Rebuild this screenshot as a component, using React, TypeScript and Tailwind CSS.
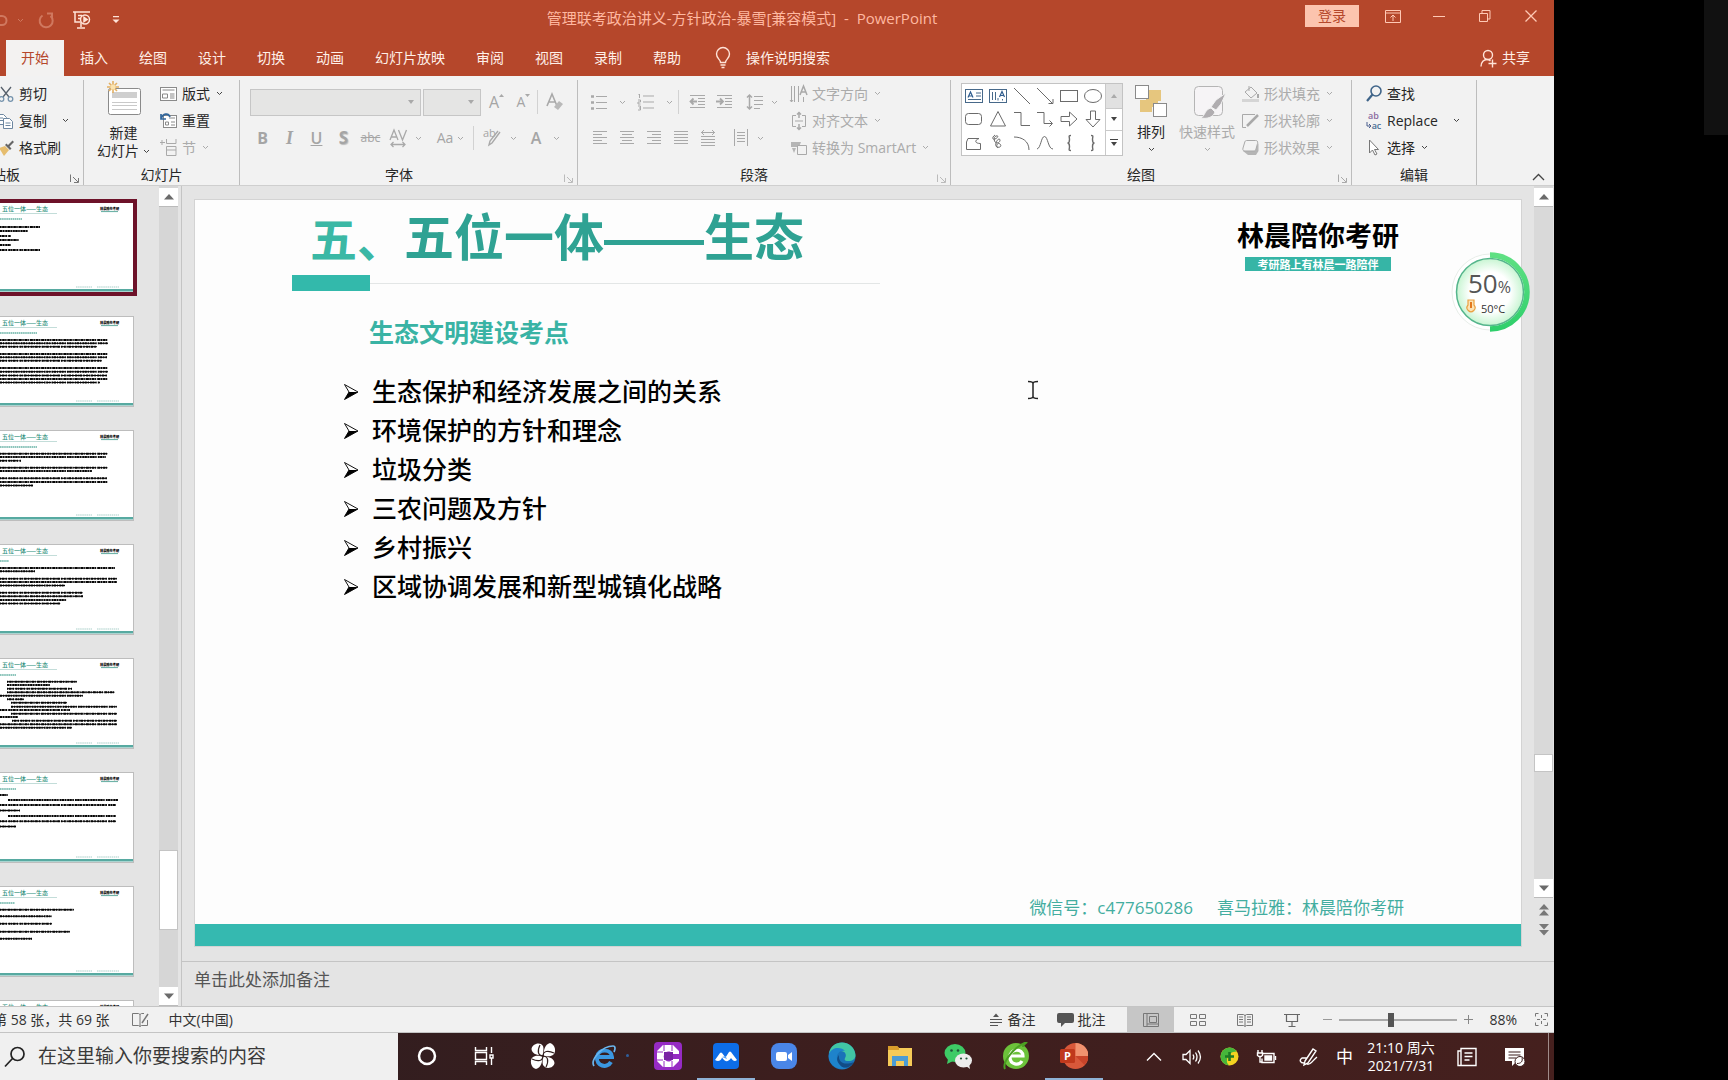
import React from "react";

type Kids = { children?: React.ReactNode };

function Ico({ w = 16, h = 16, s = "#555", sw = 1, f = "none", children }: Kids & { w?: number; h?: number; s?: string; sw?: number; f?: string }) {
  return (
    <svg width={w} height={h} viewBox={`0 0 ${w} ${h}`} fill={f} stroke={s} strokeWidth={sw} className="shrink-0 overflow-visible" aria-hidden="true">
      {children}
    </svg>
  );
}

const Chev = ({ c = "#444" }: { c?: string }) => (
  <Ico w={7} h={5} s={c}><path d="M1 1l2.5 2.5L6 1" /></Ico>
);
const Tri = ({ up = false, c = "#6b6b6b" }: { up?: boolean; c?: string }) => (
  <Ico w={10} h={6} s="none" f={c}><path d={up ? "M0 5.5L5 0l5 5.5z" : "M0 .5L5 6l5-5.5z"} /></Ico>
);
const Launcher = ({ c = "#777" }: { c?: string }) => (
  <Ico w={9} h={9} s={c}><path d="M.5 8V.5M3 3l5 5M8.5 4v4.500H4" /></Ico>
);
const VSep = () => <span className="h-6 w-px shrink-0 bg-[#d2d2d2]" />;

const GRAY = "#a9a9a9";

function Group({ label, launch, className, labelClass = "justify-center", children }: Kids & { label: string; launch?: string; className: string; labelClass?: string }) {
  return (
    <section aria-label={label} className={`flex shrink-0 flex-col border-r border-[#bdbdbd] ${className}`}>
      <div className="flex h-[85px]">{children}</div>
      <div className={`relative flex h-5 items-center text-sm ${labelClass}`}>
        <span className="leading-5">{label}</span>
        {launch && (
          <button aria-label={`${label}设置`} className="absolute right-1 bottom-[2px]"><Launcher c={launch} /></button>
        )}
      </div>
    </section>
  );
}

function RowBtn({ icon, text, chev, dim, wide }: { icon: React.ReactNode; text: string; chev?: boolean; dim?: boolean; wide?: boolean }) {
  return (
    <button className={`flex h-[27px] items-center gap-[5px] whitespace-nowrap text-sm ${dim ? "text-[#ababab]" : "text-[#262626]"}`}>
      <span className="flex w-[17px] shrink-0 justify-center">{icon}</span>
      <span>{text}</span>
      {chev && <span className={wide ? "ml-[10px]" : "ml-px"}><Chev c={dim ? "#ababab" : "#444"} /></span>}
    </button>
  );
}

const tabs = ["插入", "绘图", "设计", "切换", "动画", "幻灯片放映", "审阅", "视图", "录制", "帮助"];

function TitleBar() {
  return (
    <header className="bg-[#b5472b] text-[#ffc9b5]">
      <div className="relative flex h-10 items-start justify-center">
        <div className="absolute top-2 left-0 flex h-6 items-center">
          <button aria-label="撤消"><Ico w={8} h={18} s="#d0785f" sw={2}><path d="M-4 5h6a4.500 4.500 0 010 9H-1" /></Ico></button>
          <span className="ml-[9px]"><Chev c="#d0785f" /></span>
          <button aria-label="恢复" className="ml-[14px]"><Ico w={18} h={18} s="#d0785f" sw={2}><path d="M4.500 4.500a6.500 6.500 0 108 .5M9 2.500h5v5" /></Ico></button>
          <button aria-label="从头开始" className="ml-4">
            <Ico w={20} h={20} s="#ffe3d8" sw={1.500}>
              <path d="M1 2h17M3 2v10h5M6 5.500h4M6 8.500h2M9 12v5M5 18h8" /><circle cx="13" cy="9.500" r="4.500" /><path d="M12 7.500v4l3-2z" fill="#ffe3d8" />
            </Ico>
          </button>
          <button aria-label="自定义快速访问工具栏" className="ml-5"><Ico w={8} h={8} s="none" f="#ffe3d8"><path d="M1 0h6v1.300H1zM.5 3.500h7L4 7z" /></Ico></button>
        </div>
        <h1 className="mt-2 ml-[-70px] text-[15px] leading-5 whitespace-pre text-[#ffb8a0]">管理联考政治讲义-方针政治-暴雪[兼容模式]  -  PowerPoint</h1>
        <div className="absolute top-[5px] right-[16px] flex h-[22px] items-center">
          <button className="mr-[26px] h-[22px] w-[54px] bg-[#fcc4ae] text-sm text-[#b5472b]">登录</button>
          <button aria-label="功能区显示选项" className="mr-8"><Ico s="#ffc9b5"><path d="M.5 2.500h15v12H.5zM.5 5h15M8 13V7M5.500 9.500L8 7l2.500 2.500" /></Ico></button>
          <button aria-label="最小化" className="mr-[33px]"><Ico w={12} s="#ffc9b5"><path d="M0 8.500h12" /></Ico></button>
          <button aria-label="还原" className="mr-8"><Ico w={14} s="#ffc9b5"><path d="M1.500 5.500h8v8h-8zM4 5V2.500h8v8.500H9.500" /></Ico></button>
          <button aria-label="关闭"><Ico w={14} s="#ffc9b5" sw={1.300}><path d="M1.500 2.500l11 11M12.500 2.500l-11 11" /></Ico></button>
        </div>
      </div>
      <nav className="flex h-9 items-stretch gap-px pl-[6px] text-sm text-[#fff0e8]">
        <button className="bg-[#f3f2f1] px-[15px] text-[#b5472b]">开始</button>
        {tabs.map((t) => <button key={t} className="px-[15px] whitespace-nowrap">{t}</button>)}
        <button className="ml-[18px] flex items-center gap-[15px]">
          <Ico w={16} h={22} s="#ffe3d8" sw={1.400}><path d="M5.500 15.500c0-3-4-4-4-8.500a6.500 6.500 0 0113 0c0 4.500-4 5.500-4 8.500zM5.500 18h5M6.500 20.500h3" /></Ico>
          操作说明搜索
        </button>
        <button className="mr-6 ml-auto flex items-center gap-1">
          <Ico w={18} h={19} s="#ffe3d8" sw={1.400}><circle cx="8" cy="6" r="4.500" /><path d="M1 17.500c0-4.500 3-7 6-7 1.500 0 2.500.5 3.500 1.500M8.500 14.500h8M12.500 10.500v8" /></Ico>
          共享
        </button>
      </nav>
    </header>
  );
}

const BtnI = ({ label, className = "w-[27px]", children }: Kids & { label: string; className?: string }) => (
  <button aria-label={label} className={`flex shrink-0 items-center justify-center ${className}`}>{children}</button>
);

function Lines({ kind }: { kind: "l" | "c" | "r" | "j" | "d" }) {
  const rows = kind === "d" ? [6.500, 9.500, 12.500, 15.500] : [1.500, 4.500, 7.500, 10.500, 13.500];
  return (
    <Ico s={GRAY}>
      {rows.map((y, i) => {
        const short = i % 2 === 1 && kind !== "j" && kind !== "d";
        const a = short ? (kind === "c" ? 3 : kind === "r" ? 6 : 1) : 1;
        const b = short ? (kind === "c" ? 13 : kind === "l" ? 10 : 15) : 15;
        return <path key={y} d={`M${a} ${y}H${b}`} />;
      })}
      {kind === "d" && <path d="M1 2.500h14M4 0L1.500 2.500 4 5M12 0l2.500 2.500L12 5" />}
    </Ico>
  );
}

const shapes: React.ReactNode[] = [
  <g key="a"><rect x=".5" y="2.500" width="17" height="13" stroke="#47698a" /><path d="M11 6h5M11 9h5M3 12.500h13" stroke="#47698a" /><path d="M3 10.500L5.500 5 8 10.500M4 9h3" stroke="#2f5d8f" strokeWidth="1.200" /></g>,
  <g key="b"><rect x=".5" y="2.500" width="17" height="13" stroke="#47698a" /><path d="M3.500 5v8M6.500 5v8M9 11v2.500M13.500 12v1.500" stroke="#47698a" /><path d="M10.500 10L13 4.500 15.500 10M11.500 8.500h3" stroke="#2f5d8f" strokeWidth="1.200" /></g>,
  <path key="c" d="M1 1l16 16" />,
  <path key="d" d="M1 1l16 16M12.500 16.500H17V12" />,
  <rect key="e" x=".5" y="3.500" width="17" height="11" />,
  <ellipse key="f" cx="9" cy="9" rx="8.500" ry="6.500" />,
  <rect key="g" x=".5" y="3.500" width="16" height="11" rx="3" />,
  <path key="h" d="M9 1.500L16.500 16h-15z" />,
  <path key="i" d="M1 2.500h7v13h9" />,
  <path key="j" d="M1 2.500h7v11h8M13.500 10.500l3 3-3 3" />,
  <path key="k" d="M1 6.500h8.500V2L17 9l-7.500 7v-4.500H1z" />,
  <path key="l" d="M6.500 1v8.500H2L9 17l7-7.500h-4.500V1z" />,
  <path key="m" d="M3 4.500h11c-5 2-4 5 1.500 5v6H1.500V8z" />,
  <path key="n" d="M6 1C3 3 3 6 6 5s4-4 1-3-2 7 1 7 4-4 2-4-5 7-2 8 5-1 3-3-5 2-2 4" />,
  <path key="o" d="M1 3c8 0 15 4 15 13" />,
  <path key="p" d="M1 15C5 14 5 2.500 8.500 2.500S12 15 17 15" />,
  <path key="q" d="M11 1.500c-3 0-1.500 1-1.500 4 0 2-.5 3.500-2 3.500 1.500 0 2 1.500 2 3.500 0 3-1.500 4 1.500 4" strokeWidth="1.400" />,
  <path key="r" d="M7 1.500c3 0 1.500 1 1.500 4 0 2 .5 3.500 2 3.500-1.500 0-2 1.500-2 3.500 0 3 1.500 4-1.500 4" strokeWidth="1.400" />,
];

function Ribbon() {
  return (
    <div className="flex h-[110px] shrink-0 overflow-hidden border-b border-[#cfcfcf] bg-[#f2f2f2] pt-1 text-[#262626]">
      <Group label="剪贴板" launch="#777" className="w-[84px]" labelClass="-ml-[22px] justify-start">
        <div className="-ml-[3px] flex flex-col">
          <RowBtn text="剪切" icon={<Ico s="#56606b" sw={1.300}><path d="M3 1l8 10M13 1L5 11" /><circle cx="3.500" cy="13" r="2.300" stroke="#7593ad" /><circle cx="12.500" cy="13" r="2.300" stroke="#7593ad" /></Ico>} />
          <RowBtn text="复制" chev wide icon={<Ico w={17} s="#6d87a0"><path d="M.5 1.500h6l3 3v7h-9z" fill="#fff" /><path d="M6.500 5.500h6l3 3v7h-9z" fill="#fff" /><path d="M2 5h4M2 7.500h4M8.500 10h5M8.500 12.500h5" /></Ico>} />
          <RowBtn text="格式刷" icon={<Ico s="none"><path d="M1 8l6-2 4 4-5 6z" fill="#e6bd6e" /><path d="M7 5l5 5 1.500-1.500-2-2L16 2l-1.500-1.500L10 5 8.500 3.500z" fill="#666" /></Ico>} />
        </div>
      </Group>

      <Group label="幻灯片" className="w-[156px]">
        <div className="flex gap-[9px] pl-3">
          <button className="flex w-[55px] flex-col items-center text-sm leading-[18px] whitespace-nowrap">
            <Ico w={36} h={38} s="#8a8a8a">
              <rect x="2.500" y="8.500" width="32" height="26" rx="2" fill="#fff" />
              <rect x="6" y="12" width="25" height="6" fill="#cfcfcf" stroke="none" />
              <path d="M6 22.500h25M6 25.500h25M6 29.500h25" stroke="#c9c9c9" />
              <path d="M7 1v12M1 7h12M3 3l8 8M11 3l-8 8" stroke="#e3b062" strokeWidth="1.600" /><circle cx="7" cy="7" r="2.500" fill="#fbe3ae" stroke="none" />
            </Ico>
            <span className="mt-[6px]">新建</span>
            <span className="flex items-center gap-1">幻灯片<Chev /></span>
          </button>
          <div className="flex flex-col">
            <RowBtn text="版式" chev icon={<Ico w={17} s="#8a8a8a"><rect x=".5" y="1.500" width="16" height="13" fill="#fff" /><path d="M2.500 4h12M2.500 8h5v4h-5zM10 8h4.500M10 10h4.500M10 12h4.500" stroke="#888" /></Ico>} />
            <RowBtn text="重置" icon={<Ico w={17} h={17} s="#8a8a8a"><rect x="3.500" y="3.500" width="13" height="12" fill="#fff" /><path d="M9 6h6M5.500 10h3v3h-3zM11 10h4M11 13h4" /><path d="M1 2v5h5M1 6.500C3 2 8 0 10 5" stroke="#33679c" strokeWidth="1.700" /></Ico>} />
            <RowBtn text="节" chev dim icon={<Ico w={17} h={18} s={GRAY}><path d="M2 1v5M0 3.500h5M6.500 0v4.500H16V0M6.500 7.500H16v9H6.500zM6.500 11H16" /></Ico>} />
          </div>
        </div>
      </Group>

      <Group label="字体" launch="#bbb" className="w-[338px]" labelClass="justify-center pr-[19px]">
        <div className="flex w-full flex-col pt-[8px] pl-2 text-[#a5a5a5]">
          <div className="flex h-7 items-center">
            <select aria-label="字体名称" disabled className="ml-[2px] h-[27px] w-[171px] appearance-none border border-[#c6c6c6] bg-[#e5e5e4]" />
            <span className="pointer-events-none -ml-[13px] w-[13px]"><Ico w={6} h={4} s="none" f={GRAY}><path d="M0 0h6L3 4z" /></Ico></span>
            <select aria-label="字号" disabled className="ml-[2px] h-[27px] w-[58px] appearance-none border border-[#c6c6c6] bg-[#e5e5e4]" />
            <span className="pointer-events-none -ml-[13px] w-[13px]"><Ico w={6} h={4} s="none" f={GRAY}><path d="M0 0h6L3 4z" /></Ico></span>
            <BtnI label="增大字号" className="ml-[2px] w-[27px]"><span className="text-base">A</span><span className="-mt-3"><Ico w={5} h={4} s="none" f={GRAY}><path d="M0 3L2.500 0 5 3z" /></Ico></span></BtnI>
            <BtnI label="减小字号"><span className="text-sm">A</span><span className="-mt-3"><Ico w={5} h={4} s="none" f={GRAY}><path d="M0 0h5L2.500 3z" /></Ico></span></BtnI>
            <VSep />
            <BtnI label="清除格式" className="w-[34px]"><Ico w={18} h={18} s={GRAY} sw={1.600}><path d="M1 13L6 1l5 12M3 9h6" /><path d="M8 14l5-6 4 3-5 6z" fill="#b9b9b9" stroke="none" /></Ico></BtnI>
          </div>
          <div className="mt-2 flex h-7 items-center pl-px text-base">
            <BtnI label="加粗"><b>B</b></BtnI>
            <BtnI label="倾斜"><span className="font-['Liberation_Serif'] text-lg font-bold italic">I</span></BtnI>
            <BtnI label="下划线"><span className="font-semibold underline">U</span></BtnI>
            <BtnI label="阴影"><b className="text-[17px] text-shadow-[1px_1px_1px_#bbb]">S</b></BtnI>
            <BtnI label="删除线"><span className="text-xs line-through">abc</span></BtnI>
            <BtnI label="字符间距" className="w-11 gap-2 pr-px">
              <Ico w={18} h={18} s={GRAY} sw={1.300}><path d="M1 11L5 1l4 10M2.500 8h5M9.500 1l4 10 4-10M2 15.500h14M4.500 13L2 15.500 4.500 18M13.500 13l2.500 2.500-2.500 2.500" /></Ico><Chev c={GRAY} />
            </BtnI>
            <BtnI label="更改大小写" className="w-[45px] gap-1 text-sm">Aa<Chev c={GRAY} /></BtnI>
            <VSep />
            <BtnI label="突出显示" className="ml-1 w-11 gap-[9px]">
              <span className="relative flex h-[18px] w-[18px]"><span className="-mt-1 text-[11px] leading-4">ab</span><svg width="18" height="18" viewBox="0 0 18 18" fill="none" stroke={GRAY} strokeWidth="1.400" className="absolute inset-0" aria-hidden="true"><path d="M17 3L9 14l-3 2 1-4 8-10" /></svg></span><Chev c={GRAY} />
            </BtnI>
            <BtnI label="字体颜色" className="w-[47px] gap-3"><span className="font-semibold">A</span><Chev c={GRAY} /></BtnI>
          </div>
        </div>
      </Group>

      <Group label="段落" launch="#bbb" className="w-[373px]" labelClass="justify-center pr-[20px]">
        <div className="flex w-[210px] flex-col pt-[8px] pl-2">
          <div className="flex h-7 items-center">
            <BtnI label="项目符号" className="w-[45px] gap-3"><Ico s={GRAY}><path d="M5 2.500h11M5 8.500h11M5 14.500h11" /><path d="M0 2.500h3M0 8.500h3M0 14.500h3" strokeWidth="2.500" /></Ico><Chev c={GRAY} /></BtnI>
            <BtnI label="编号" className="ml-px w-[46px] gap-3"><Ico w={17} h={18} s={GRAY}><path d="M6 3h11M6 9h11M6 15h11M2.500 1v4M1.500 2l1-1M1 7h2.500v2H1v2h2.500M1 13h2.500v2H2M3.500 15v2H1" /></Ico><Chev c={GRAY} /></BtnI>
            <VSep />
            <BtnI label="减少缩进" className="ml-1 w-[27px]"><Ico s={GRAY}><path d="M1 1.500h15M9 4.500h7M9 7.500h7M9 10.500h7M1 13.500h15" /><path d="M8 7.500H1.500M4.500 4.500l-3 3 3 3" strokeWidth="1.800" /></Ico></BtnI>
            <BtnI label="增加缩进"><Ico s={GRAY}><path d="M1 1.500h15M9 4.500h7M9 7.500h7M9 10.500h7M1 13.500h15" /><path d="M0 7.500h6.500M4 4.500l3 3-3 3" strokeWidth="1.800" /></Ico></BtnI>
            <span className="ml-[2px]"><VSep /></span>
            <BtnI label="行距" className="w-[46px] gap-2"><Ico w={17} h={18} s={GRAY}><path d="M8 3.500h9M8 7.500h9M8 11.500h9M8 15.500h6" /><path d="M3.500 2v14M1 4.500L3.500 2 6 4.500M1 13.500L3.500 16 6 13.500" strokeWidth="1.500" /></Ico><Chev c={GRAY} /></BtnI>
          </div>
          <div className="mt-2 flex h-7 items-center">
            <BtnI label="左对齐"><Lines kind="l" /></BtnI>
            <BtnI label="居中"><Lines kind="c" /></BtnI>
            <BtnI label="右对齐"><Lines kind="r" /></BtnI>
            <BtnI label="两端对齐"><Lines kind="j" /></BtnI>
            <BtnI label="分散对齐"><Lines kind="d" /></BtnI>
            <span className="ml-[3px]"><VSep /></span>
            <BtnI label="分栏" className="ml-[2px] w-[44px] gap-2"><Ico h={18} s={GRAY}><path d="M1.500 0v17M14.500 0v17M4 3.500h8M4 6.500h8M4 9.500h8M4 12.500h8" /></Ico><Chev c={GRAY} /></BtnI>
          </div>
        </div>
        <div className="flex flex-col pl-[2px]">
          <RowBtn dim chev text="文字方向" icon={<Ico w={18} h={18} s={GRAY}><path d="M1.500 1v16M4.500 1v16M8.500 1v16M0 15l1.500 2L3 15M13.500 12v5" /><path d="M10 10l3.500-9L17 10M11.500 7h4" strokeWidth="1.500" /></Ico>} />
          <RowBtn dim chev text="对齐文本" icon={<Ico h={18} s={GRAY}><path d="M5 3.500H1.500v11H5M11 3.500h3.500v11H11M4 9h8" /><path d="M8 0v6M6 2.500L8 .5l2 2M8 12v6M6 15.500l2 2 2-2" strokeWidth="1.500" /></Ico>} />
          <RowBtn dim chev text="转换为 SmartArt" icon={<Ico s={GRAY}><path d="M0 2h10l-2 5H0zM1 8h4l-2 5z" fill="#b5b5b5" stroke="none" /><path d="M6.500 5.500h9v9h-9z" fill="#f2f2f2" /></Ico>} />
        </div>
      </Group>

      <Group label="绘图" launch="#aaa" className="w-[401px]" labelClass="justify-center pr-[20px]">
        <div className="mt-[3px] ml-[10px] flex h-[73px] shrink-0 border border-[#c3c3c3] bg-white">
          <div className="grid w-[143px] grid-cols-6 grid-rows-3 place-items-center">
            {shapes.map((s, i) => <button key={i} aria-label={`形状 ${i + 1}`}><Ico w={18} h={18} s="#6b6b6b">{s}</Ico></button>)}
          </div>
          <div className="grid w-[17px] grid-rows-3 border-l border-[#c9c9c9] [&>button]:flex [&>button]:items-center [&>button]:justify-center">
            <button aria-label="上一行" className="bg-[#e1e1e1]"><Ico w={6} h={4} s="none" f="#aaa"><path d="M0 4h6L3 0z" /></Ico></button>
            <button aria-label="下一行" className="border-y border-[#c9c9c9]"><Ico w={6} h={4} s="none" f="#444"><path d="M0 0h6L3 4z" /></Ico></button>
            <button aria-label="其他形状"><Ico w={8} h={8} s="none" f="#444"><path d="M0 0h8v1H0zM1 3h6L4 7z" /></Ico></button>
          </div>
        </div>
        <button className="ml-[10px] flex w-[36px] shrink-0 flex-col items-center pt-px text-sm leading-5">
          <Ico w={34} h={38} s="#8a8a8a"><path d="M15 9h12v11H15zM6 19h12v12H6z" fill="#e6c67e" stroke="none" /><rect x="12" y="12" width="12" height="14" fill="#e6c67e" stroke="none" /><rect x="1.500" y="4.500" width="13" height="13" fill="#fff" /><rect x="19.500" y="22.500" width="13" height="13" fill="#fff" /></Ico>
          <span className="mt-[3px] mb-[5px]">排列</span><Chev />
        </button>
        <button className="ml-[9px] flex w-[58px] shrink-0 flex-col items-center pt-px text-sm leading-5 whitespace-nowrap text-[#ababab]">
          <Ico w={34} h={38} s="#b5b5b5"><rect x="4.500" y="5.500" width="28" height="29" rx="4" fill="#f6f4f6" /><path d="M36 12l-5 11-5 6-5-3 5-7zM21 27l4 4c-2 6-9 7-14 6 4-2 4-9 10-10z" fill="#b0adb0" stroke="#f2f2f2" /></Ico>
          <span className="mt-[3px] mb-[5px]">快速样式</span><Chev c={GRAY} />
        </button>
        <div className="ml-[6px] flex flex-col">
          <RowBtn dim chev text="形状填充" icon={<Ico w={17} h={17} s={GRAY}><path d="M3 7l6-5 6 6-6 5zM7 6V1" /><path d="M16 9v4" strokeWidth="2" /><path d="M0 15.500h17" stroke="#d5d5d5" strokeWidth="3" /></Ico>} />
          <RowBtn dim chev text="形状轮廓" icon={<Ico w={17} s={GRAY}><path d="M13 1.500H.5v13H4" /><path d="M16 2L8 10l-3 3" strokeWidth="2.500" /></Ico>} />
          <RowBtn dim chev text="形状效果" icon={<Ico w={17} h={17} s={GRAY}><path d="M1 12l5 4h8l2.500-4V4L13 10z" fill="#b5b5b5" stroke="none" /><path d="M4.500 1.500h9c2 0 2.500 1 2 3L14 10c-.5 2-1 2-3 2H3c-2 0-2.500-1-2-3l1.500-5c.5-2 1-2.500 2-2.500z" fill="#f2f2f2" /></Ico>} />
        </div>
      </Group>

      <Group label="编辑" className="w-[125px]">
        <div className="flex flex-col pl-[13px]">
          <RowBtn text="查找" icon={<Ico h={17} s="#3f6489" sw={1.600}><circle cx="10" cy="6" r="5" /><path d="M6.500 9.500L1 16" strokeWidth="2.200" /></Ico>} />
          <RowBtn text="Replace" chev wide icon={
            <span className="flex flex-col text-[9px] leading-[10px] font-semibold">
              <span className="text-[#8a6a9f]">ab</span>
              <span className="flex items-center text-[#4a6f95]"><Ico w={6} h={7} s="#4a5f8f"><path d="M1 0v4h4M3 2l2 2-2 2" /></Ico>ac</span>
            </span>
          } />
          <RowBtn text="选择" chev icon={<Ico w={12} h={17} s="#777"><path d="M1.500 1v13l3-3 2.500 5 2-1-2.500-4.500h4z" fill="#fff" /></Ico>} />
        </div>
      </Group>
      <button aria-label="折叠功能区" className="mr-[9px] mb-[4px] ml-auto self-end"><Ico w={13} h={8} s="#444" sw={1.300}><path d="M1 7l5.500-5.500L12 7" /></Ico></button>
    </div>
  );
}

type Row = [number, number, number];
const thumbs: { head: number; rows: Row[] }[] = [
  { head: 22, rows: [[0, 40, 24], [0, 28, 28], [0, 11, 33], [0, 19, 37], [0, 11, 42], [0, 40, 47]] },
  { head: 37, rows: [[0, 108, 23], [0, 108, 26.300], [0, 97, 29.700], [0, 108, 37], [0, 107, 40.300], [0, 102, 43.700], [0, 108, 51], [0, 108, 54.700], [0, 108, 58.500], [0, 108, 62], [0, 100, 65.500]] },
  { head: 37, rows: [[0, 108, 22.700], [0, 106, 26], [0, 21, 29.700], [0, 108, 36.700], [0, 92, 40], [0, 108, 47.300], [0, 108, 51], [0, 33, 54.500]] },
  { head: 9, rows: [[0, 115, 23], [0, 35, 26.300], [0, 117, 33.700], [0, 117, 37], [0, 65, 40.500], [0, 83, 47.700], [0, 83, 51.300], [0, 67, 55], [0, 61, 58.500]] },
  { head: 16, rows: [[7, 77, 22.700], [7, 50, 26], [7, 72, 29.700], [7, 115, 33.300], [0, 83, 36.700], [7, 24, 40.300], [11, 67, 43.700], [11, 117, 47.700], [0, 70, 51], [11, 117, 54.700], [0, 18, 58], [12, 117, 61.700], [0, 117, 65.300], [0, 72, 68.700]] },
  { head: 16, rows: [[0, 8, 22], [8, 118, 27], [0, 116, 32], [0, 20, 37.500], [8, 116, 43], [0, 116, 48.300], [0, 16, 53.500]] },
  { head: 15, rows: [[0, 74, 22.700], [0, 52, 29.300], [0, 52, 36.700], [0, 70, 44.700], [0, 32, 51.700]] },
  { head: 15, rows: [] },
];
const dashes = ["9 .6 13 1 6 .6 17 2", "14 .8 8 .6 21 2 5 .6", "7 .6 11 .8 4 1.600 16 .6"];
const fine = ["1.300 1 2.300 .7 1 1.300 2.800 .8", "2.100 .9 1.200 1.200 1.700 .6", "1 .8 2.600 1.100 1.500 1.400 2 .7"];

function Thumb({ i, head, rows }: { i: number; head: number; rows: Row[] }) {
  return (
    <button
      aria-label={`幻灯片 ${58 + i}`}
      className={`block h-[89px] w-[133px] shrink-0 bg-white text-left ${i === 0 ? "shadow-[0_0_0_4px_#6d1229]" : "shadow-[0_0_0_1px_#bdbdbd]"}`}
    >
      <svg width="133" height="89" viewBox="0 0 133 89" className="block font-['Noto_Sans_CJK_SC']" aria-hidden="true">
        <text x="2" y="8" fontSize="6" fontWeight="500" fill="#2d8f7c">五位一体——生态</text>
        <path d="M0 10.500h57" stroke="#a9cfc8" strokeWidth=".7" />
        <text x="100" y="6.500" fontSize="3.200" fontWeight="900" fill="#000">林晨陪你考研</text>
        <path d="M101 8.500h17" stroke="#6fb3a8" strokeWidth="1.200" />
        <path d={`M0 16h${head}`} stroke="#8cc5bb" strokeWidth="1.800" strokeDasharray="1.600 .5" />
        {rows.map(([a, b, y], k) => (
          <g key={k} stroke="#050505">
            <path d={`M${a} ${y}H${b}`} strokeWidth="1" strokeDasharray={dashes[k % 3]} />
            <path d={`M${a} ${y}H${b}`} strokeWidth="2.100" strokeDasharray={fine[k % 3]} />
          </g>
        ))}
        <path d="M76 84h16M97 84h22" stroke="#9fc9c3" strokeWidth=".9" strokeDasharray="1.500 .6" />
        <rect y="86" width="133" height="2.500" fill="#57aaa1" />
      </svg>
    </button>
  );
}

const ScrollBtn = ({ up, label }: { up?: boolean; label: string }) => (
  <button aria-label={label} className="flex h-[19px] w-full shrink-0 items-center justify-center border-b border-[#bbb] bg-white"><Tri up={up} /></button>
);

const points = ["生态保护和经济发展之间的关系", "环境保护的方针和理念", "垃圾分类", "三农问题及方针", "乡村振兴", "区域协调发展和新型城镇化战略"];

function Gauge() {
  return (
    <div className="absolute top-[52px] -right-[10px] size-20">
      <svg width="80" height="80" viewBox="0 0 80 80" className="absolute inset-0" aria-hidden="true">
        <defs>
          <radialGradient id="gg"><stop offset="60%" stopColor="#fff" /><stop offset="100%" stopColor="#c8f5d2" /></radialGradient>
          <linearGradient id="ga" x1="0" y1="0" x2="0" y2="1"><stop offset="0" stopColor="#5fe083" /><stop offset="1" stopColor="#2fcf6b" /></linearGradient>
        </defs>
        <circle cx="39" cy="40" r="38" fill="#fff" stroke="#e8eee9" />
        <circle cx="39" cy="40" r="33.500" fill="url(#gg)" stroke="#55b58c" strokeWidth="1.500" />
        <path d="M39 3a37 37 0 010 74" fill="none" stroke="url(#ga)" strokeWidth="5.500" />
        <path d="M17 48h6v5a4 4 0 11-6 0z" fill="#fce3b4" stroke="#eaa040" strokeWidth="1.200" /><path d="M20 50v6" stroke="#e2791f" strokeWidth="2" />
      </svg>
      <div className="relative flex h-full flex-col pt-[17px] pl-[17px] text-[#555]">
        <div className="leading-7"><span className="text-[26px]">50</span><span className="text-base">%</span></div>
        <div className="pl-[13px] text-[11px] leading-4 text-[#333]">50°C</div>
      </div>
    </div>
  );
}

function Slide() {
  return (
    <article className="relative flex min-h-0 flex-1 flex-col bg-[#fdfdfd] shadow-[0_0_0_1px_#d3d3d3]">
      <div className="flex justify-between">
        <div className="pl-[97px]">
          <h2 className="flex h-[75px] items-center pb-[2px] pl-[18px] font-['Noto_Sans_CJK_SC'] leading-none font-bold text-[#2fa293]">
            <span className="text-[47px] text-[#3bb8a5]">五、</span>
            <span className="text-[50px]">五位一体<span className="font-['Liberation_Sans']">——</span>生态</span>
          </h2>
          <div className="flex items-center"><span className="h-4 w-[78px] bg-[#33b9ab]" /><span className="h-px w-[510px] bg-[#e3e6e6]" /></div>
        </div>
        <div className="mr-[122px] flex flex-col items-center pt-[18px]">
          <p className="text-[27px] leading-[36px] font-bold text-black">林晨陪你考研</p>
          <p className="mt-[3px] flex h-[14px] w-[146px] items-center justify-center bg-[#36b5a6] text-[11px] leading-none font-bold text-white">考研路上有林晨一路陪伴</p>
        </div>
      </div>
      <h3 className="mt-[23px] pl-[174px] text-[25px] leading-9 font-bold text-[#39b3a4]">生态文明建设考点</h3>
      <ul className="mt-[22px] pl-[148px] text-[25px] leading-[39px] font-medium text-black">
        {points.map((p) => (
          <li key={p} className="flex items-center gap-3">
            <Ico w={17} h={20} s="#111"><path d="M1.500 2.500L15 10l-13.500 7.500 4.500-7.500z" /><path d="M6 10h9l-13.500 7.500z" fill="#000" stroke="none" /></Ico>
            {p}
          </li>
        ))}
      </ul>
      <p className="mt-auto mr-[117px] mb-1 flex justify-end text-[17px] leading-6 whitespace-pre text-[#43ada0]">
        <span>微信号：c477650286</span><span className="ml-6">喜马拉雅：</span><span>林晨陪你考研</span>
      </p>
      <div className="h-[22px] bg-[#35b9b0]" />
      <Gauge />
      <svg width="12" height="20" viewBox="0 0 12 20" fill="none" stroke="#222" strokeWidth="1.500" className="absolute top-[180px] left-[832px]" aria-hidden="true"><path d="M1 1.500c3 0 5 0 5 2 0-2 2-2 5-2M6 3v14M1 18.500c3 0 5 0 5-2 0 2 2 2 5 2" /></svg>
    </article>
  );
}

function Workspace() {
  return (
    <main className="flex min-h-0 flex-1 bg-[#e4e4e4]">
      <aside aria-label="幻灯片缩略图" className="flex w-[182px] shrink-0 justify-between border-r border-[#c4c4c4] pr-[3px]">
        <div className="min-h-0 overflow-hidden pt-[17px] pr-2">
          <div className="flex flex-col gap-[25px]">{thumbs.map((t, i) => <Thumb key={i} i={i} {...t} />)}</div>
        </div>
        <div className="flex w-[19px] flex-col bg-[#d6d6d6] pt-[2px]">
          <ScrollBtn up label="向上滚动" />
          <div className="flex-1" />
          <div className="h-20 border border-[#c4c4c4] bg-white" />
          <div className="h-[57px]" />
          <ScrollBtn label="向下滚动" />
        </div>
      </aside>
      <div className="flex min-w-0 flex-1 flex-col">
        <div className="flex min-h-0 flex-1 border-b border-[#c4c4c4]">
          <div className="flex min-w-0 flex-1 flex-col pt-[14px] pr-[13px] pb-[15px] pl-[13px]"><Slide /></div>
          <div className="flex w-5 shrink-0 flex-col items-center bg-[#e4e4e4] pr-px">
            <div className="flex w-full flex-1 flex-col bg-[#d9d9d9] pt-[2px]">
              <ScrollBtn up label="上一页" />
              <div className="flex-1" />
              <div className="h-[18px] border border-[#c4c4c4] bg-white" />
              <div className="h-[107px]" />
              <ScrollBtn label="下一页" />
            </div>
            <button aria-label="上一张幻灯片" className="mt-[6px]"><Ico w={12} h={12} s="none" f="#777"><path d="M6 0l5 5.500H1zM6 6l5 5.500H1z" /></Ico></button>
            <button aria-label="下一张幻灯片" className="mt-2 mb-[25px]"><Ico w={12} h={12} s="none" f="#777"><path d="M6 5.500L1 0h10zM6 11.500L1 6h10z" /></Ico></button>
          </div>
        </div>
        <div className="flex h-11 shrink-0 pt-[6px] pl-3 text-[17px] leading-6 text-[#555]">单击此处添加备注</div>
      </div>
    </main>
  );
}

function StatusBar() {
  return (
    <footer className="flex h-[27px] shrink-0 items-center border-y border-[#c4c4c4] bg-[#f1f1f1] text-sm whitespace-nowrap text-[#333]">
      <span className="-ml-[7px]">第 58 张，共 69 张</span>
      <button aria-label="拼写检查" className="ml-[22px]"><Ico w={17} s="#777"><path d="M.5 1.500h6l1.500 1v12l-1.500-1h-6zM8 14.500l1.500-1h6V8M8 2.500l1.500-1H12" /><path d="M16 2l-6 9" strokeWidth="1.500" /></Ico></button>
      <button className="ml-5">中文(中国)</button>
      <div className="ml-auto flex h-full items-center pr-[6px]">
        <button className="flex items-center gap-[5px]"><Ico w={12} s="#555"><path d="M0 7.500h12M0 10.500h12M0 13.500h8" /><path d="M3 5L6 1.500 9 5z" fill="#555" stroke="none" /></Ico>备注</button>
        <button className="ml-[22px] flex items-center gap-[3px]"><Ico w={17} s="none" f="#555"><path d="M2 1h13a2 2 0 012 2v6a2 2 0 01-2 2H8l-4 4v-4H2a2 2 0 01-2-2V3a2 2 0 012-2z" /></Ico>批注</button>
        <div className="ml-[22px] flex h-full [&>button]:flex [&>button]:w-[47px] [&>button]:items-center [&>button]:justify-center">
          <button aria-label="普通视图" className="bg-[#c6c6c6]"><Ico s="#777"><path d="M.5 1.500h15v13H.5zM4 2v12M6.500 4.500h7v6h-7zM4 12h11" /></Ico></button>
          <button aria-label="幻灯片浏览"><Ico s="#777"><path d="M.5 2.500h6v4h-6zM9.500 2.500h6v4h-6zM.5 9.500h6v4h-6zM9.500 9.500h6v4h-6z" /></Ico></button>
          <button aria-label="阅读视图"><Ico s="#777"><path d="M.5 2.500h6l1.500 1 1.500-1h6v11h-6l-1.500 1-1.500-1h-6zM8 3v11M2 5h4M2 7.500h4M2 10h4M10 5h4M10 7.500h4M10 10h4" /></Ico></button>
          <button aria-label="幻灯片放映视图"><Ico s="#666"><path d="M0 2.500h16M2.500 3v6.500h11V3M8 9.500v5M4.500 14.500h7" strokeWidth="1.200" /></Ico></button>
        </div>
        <button aria-label="缩小" className="ml-2"><Ico w={9} h={9} s="#999"><path d="M0 4.500h9" /></Ico></button>
        <input type="range" aria-label="显示比例" min={10} max={400} defaultValue={180} className="mx-[7px] h-4 w-[118px] appearance-none bg-transparent [&::-webkit-slider-runnable-track]:h-[2px] [&::-webkit-slider-runnable-track]:bg-[#aaa] [&::-webkit-slider-thumb]:-mt-[6px] [&::-webkit-slider-thumb]:h-[14px] [&::-webkit-slider-thumb]:w-[6px] [&::-webkit-slider-thumb]:appearance-none [&::-webkit-slider-thumb]:bg-[#555]" />
        <button aria-label="放大"><Ico w={9} h={9} s="#888"><path d="M0 4.500h9M4.500 0v9" /></Ico></button>
        <span className="ml-4">88%</span>
        <button aria-label="适应窗口" className="ml-[18px]"><Ico w={13} h={13} s="#777"><path d="M3.500.5h-3v3M9.500.5h3v3M3.500 12.500h-3v-3M9.500 12.500h3v-3M6.500 2v3M6.500 8v3M2 6.500h3M8 6.500h3" /></Ico></button>
      </div>
    </footer>
  );
}

const apps: { name: string; active?: boolean; more?: boolean; icon: React.ReactNode }[] = [
  { name: "Cortana", icon: <circle cx="14" cy="14" r="8" fill="none" stroke="#fff" strokeWidth="2.500" /> },
  { name: "任务视图", icon: <path d="M4.500 5v3.500h11V5M4.500 23v-3.500h11V23M4.500 10.500h11v7h-11zM20.500 5v6M20.500 16v7M19 13h3v3h-3z" fill="none" stroke="#fff" strokeWidth="1.400" /> },
  { name: "风扇", icon: <g fill="#fff"><path d="M14 13C9 14 3 12 2.500 7 3 2 11-1 14 4c1 3 0 6 0 9z" /><path d="M15 14C14 9 16 2 21 1c5 1 7 9 3 12-3 2-6 1-9 1z" /><path d="M14 15c5-1 11 1 11.500 6-.5 5-8.500 7-11.500 2-1-3 0-5 0-8z" /><path d="M13 14c1 5-1 12-6 13-5-1-7-9-3-12 3-2 6-1 9-1z" /><path d="M14 14C9 14 8 9 11 3M14 14c0-5 5-6 11-3M14 14c5 0 6 5 3 11M14 14c0 5-5 6-11 3" fill="none" stroke="#32201f" strokeWidth="1.200" /></g> },
  { name: "Internet Explorer", more: true, icon: <g fill="none"><path d="M21 20c-4 7-15 4-14-5S22 7 22 15H8" stroke="#3b97e0" strokeWidth="4" /><path d="M4 24c-4-6 8-20 19-20 3 0 2 4 1 6" stroke="#6bb6ee" strokeWidth="1.700" /></g> },
  { name: "录屏", icon: <g><rect x="0" y="0" width="28" height="28" rx="4" fill="#962bc4" /><path d="M9 3h10l6 6v3h-6a5 5 0 100 5h6v2l-6 6H9l-6-6V9z" fill="#fff" /><rect x="10" y="10" width="9" height="8" fill="#7a22a5" /><path d="M3 10h6M3 18h6M10 3v6M18 3v6M10 19v6M18 19v6" stroke="#962bc4" /></g> },
  { name: "腾讯会议", active: true, icon: <g><rect x="1" y="1" width="26" height="26" rx="4" fill="#0d6de8" /><path d="M3 18l5-7q1-1 2 0l3.500 4.500L17 10q1-1 2 0l6 8c-2 2-4 1-6-2-3 4.500-6 4-9-.5-1 3.500-4 4.500-7 2.500z" fill="#fff" /><path d="M10 15l3.500-1 1.500 3z" fill="#5aa2f5" /></g> },
  { name: "Zoom", icon: <g><rect x="1" y="1" width="26" height="26" rx="8" fill="#4a86e8" /><rect x="6" y="10" width="11" height="9" rx="2" fill="#fff" /><path d="M18 13l4-3v9l-4-3z" fill="#fff" /></g> },
  { name: "Edge", icon: <g><circle cx="14" cy="14" r="13.500" fill="#1a73b8" /><path d="M1 12C2 4 8 .5 14 .5S27 5 27.500 13c0 4-3 6-7 6-5 0-4-2-3-4s0-6-5-6C7 9 3 9 1 12z" fill="#41c6a4" /><path d="M1 12C4 4 14 5 17 9c-5-1-9 3-8 8s5 9 10 9.500C9 29-1 22 1 12z" fill="#1e83cb" /><path d="M11 13c-1 7 5 11 15 7-3 5-10 8-14 3-3-3-4-7-1-10z" fill="#124c86" /></g> },
  { name: "文件资源管理器", icon: <g><path d="M2 4h9l2 2h13v18H2z" fill="#f6cb58" /><path d="M2 4h9l2 2v2H2z" fill="#d99d2b" /><path d="M6 24V14h16v10h-4v-5h-8v5z" fill="#4c9cd4" /></g> },
  { name: "微信", icon: <g><ellipse cx="11" cy="11" rx="10.500" ry="9" fill="#3ecb66" /><path d="M4 17l-1 5 6-3z" fill="#3ecb66" /><ellipse cx="19.500" cy="18.500" rx="8.500" ry="7" fill="#ececec" /><path d="M22 24l4 3-1-5z" fill="#ececec" /><g fill="#22543a"><circle cx="7.500" cy="8.500" r="1.300" /><circle cx="14" cy="8.500" r="1.300" /><circle cx="17" cy="16.500" r="1.100" /><circle cx="22.500" cy="16.500" r="1.100" /></g></g> },
  { name: "360 浏览器", icon: <g><circle cx="14" cy="14" r="13" fill="#6cc23a" /><path d="M20 19c-3 5-12 4-12-4 0-9 13-9 13-1H9" fill="none" stroke="#fff" strokeWidth="3.200" /><path d="M3 27c-3-6 8-22 22-27-3 3-4 2-4 5" fill="none" stroke="#4ba022" strokeWidth="2" /></g> },
  { name: "PowerPoint", active: true, icon: <g><circle cx="15.500" cy="14" r="13" fill="#d8583a" /><path d="M15.500 1a13 13 0 0113 13h-13z" fill="#f0926f" /><path d="M15.500 14h13a13 13 0 01-4 9z" fill="#c8442a" /><rect x="0" y="7" width="15" height="14" rx="1.500" fill="#c0391c" /><text x="4" y="18" fontSize="11" fontWeight="700" fill="#fff">P</text></g> },
];

function Taskbar() {
  return (
    <div className="flex h-[47px] shrink-0 items-stretch bg-linear-to-r from-[#2a1d20] via-[#3c1e1e] to-[#45201e] text-white">
      <label className="flex w-[398px] shrink-0 items-center gap-3 bg-[#f0f0f0] pl-1">
        <Ico w={22} h={22} s="#222" sw={1.700}><circle cx="13.500" cy="8" r="6.500" /><path d="M8.500 12.500L1 20.500" /></Ico>
        <input aria-label="搜索" placeholder="在这里输入你要搜索的内容" className="min-w-0 flex-1 bg-transparent text-[19px] outline-none placeholder:text-[#3a3a3a]" />
      </label>
      <div className="flex">
        {apps.map((a) => (
          <button key={a.name} aria-label={a.name} className={`flex items-center justify-center border-b-2 ${a.more ? "w-[67px] gap-2 pl-2" : "w-[58px]"} ${a.active ? "border-[#8fb2d6]" : "border-transparent"}`}>
            <svg width="28" height="28" viewBox="0 0 28 28" className="shrink-0" aria-hidden="true">{a.icon}</svg>
            {a.more && <span className="size-[3px] rounded-full bg-[#2f5f9c]" />}
          </button>
        ))}
      </div>
      <div className="mr-[5px] ml-auto flex items-center border-r border-[#a08c8a] pr-[23px]">
        <button aria-label="显示隐藏的图标"><Ico w={16} h={10} s="#fff" sw={1.400}><path d="M1 8.500l7-7 7 7" /></Ico></button>
        <button aria-label="音量" className="ml-5"><Ico w={20} h={18} s="#fff" sw={1.300}><path d="M1 6.500h3l4-4v13l-4-4H1zM11 6.500c1 1.500 1 3.500 0 5M13.500 4.500c2 3 2 6 0 9M16 2.500c3 4 3 9 0 13" /></Ico></button>
        <button aria-label="安全卫士" className="ml-[18px]"><Ico w={19} h={19} s="none"><circle cx="9.500" cy="9.500" r="9" fill="#f4d321" /><path d="M9.500.5a9 9 0 000 18c-3-2-3-5-2-8s4-6 9-6c-2-3-4-4-7-4z" fill="#46b63a" /><path d="M8.200 5h2.600v3.200H14v2.600h-3.200V14H8.200v-3.200H5V8.200h3.200z" fill="#1d7a25" /></Ico></button>
        <button aria-label="电池" className="ml-[18px]"><Ico w={20} h={16} s="#fff" sw={1.400}><path d="M5 4.500h12v9H5v-4" /><path d="M8 7h6.500v4H8z" fill="#fff" /><path d="M18.500 7v4M1 1v3M5 1v3M.5 4h5v2.500l-1.500 1H2l-1.500-1zM3 8v5h2" /></Ico></button>
        <button aria-label="Windows Ink" className="ml-[22px]"><Ico w={20} h={20} s="#fff" sw={1.400}><path d="M6 14l8-12 3 2-8 12-4 2zM8 11H3c-3 2-2 5 2 5M8 17c3 2 6-4 10-7" /></Ico></button>
        <button className="ml-[17px] text-[17px]">中</button>
        <button className="ml-3 w-[72px] text-center text-sm leading-[18px] whitespace-nowrap">21:10 周六<br />2021/7/31</button>
        <button aria-label="新闻" className="ml-5"><Ico w={20} h={20} s="#fff" sw={1.400}><path d="M4 1.500h15v17H4zM4 4H1v14.500h3M7.500 6h8M7.500 9.500h8M7.500 13h5" /></Ico></button>
        <button aria-label="通知中心" className="ml-7"><Ico w={20} h={20} s="none"><path d="M0 1h19v13h-7l-5 5v-5H0z" fill="#fff" /><path d="M3.500 5h12M3.500 8h12M3.500 11h8" stroke="#3c1e1e" strokeWidth="1.200" /><circle cx="15" cy="14.500" r="5" fill="#fff" stroke="#3c1e1e" /><path d="M17 10.500c1 4-1 6-5 6" stroke="#3c1e1e" fill="none" /></Ico></button>
      </div>
    </div>
  );
}

export default function App() {
  return (
    <div className="flex h-screen overflow-hidden bg-black font-['Open_Sans','Noto_Sans_CJK_SC',sans-serif]">
      <div className="flex min-w-0 flex-1 flex-col overflow-hidden">
        <TitleBar />
        <Ribbon />
        <Workspace />
        <StatusBar />
        <Taskbar />
      </div>
      <div className="flex w-[174px] shrink-0 justify-end"><div className="h-[135px] w-6 bg-[#111]" /></div>
    </div>
  );
}
